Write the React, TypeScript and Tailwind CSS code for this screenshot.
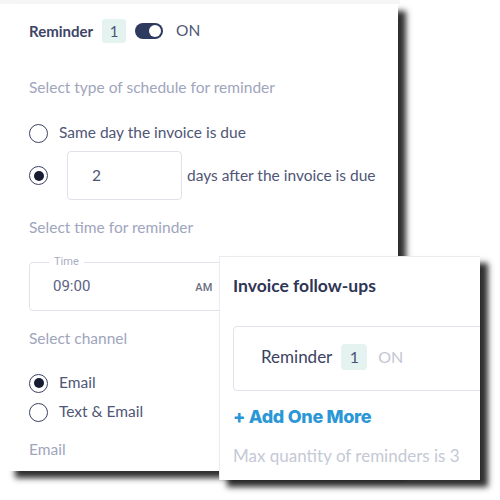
function Radio({ checked }: { checked?: boolean }) {
  return (
    <span className="flex h-[19px] w-[19px] shrink-0 items-center justify-center rounded-full border-[1.5px] border-[#3b4261] bg-white">
      {checked && <span className="h-[10px] w-[10px] rounded-full bg-[#181c33]" />}
    </span>
  )
}

function Badge({ big }: { big?: boolean }) {
  return (
    <span
      className={
        big
          ? 'flex h-[26px] w-[26px] items-center justify-center rounded-[4px] bg-[#e4f3ef] text-[16px] text-[#4a5375]'
          : 'flex h-[24px] w-[24px] items-center justify-center rounded-[3px] bg-[#e4f3ef] text-[15px] text-[#4a5375]'
      }
    >
      1
    </span>
  )
}

function ScheduleCard() {
  return (
    <div className="absolute left-[7px] top-[4px] h-[467px] w-[391px] overflow-hidden bg-white pl-[22px] pt-[15px] text-[15.5px] shadow-[8px_7px_6px_rgba(0,0,0,0.82)]">
      <div className="flex h-[24px] items-center">
        <span className="text-[15px] font-bold text-[#3d4466]">Reminder</span>
        <span className="ml-[9px]">
          <Badge />
        </span>
        <span className="ml-[9px] flex h-[16px] w-[28px] items-center justify-end rounded-full bg-[#2f3a5f] pr-[2px]">
          <span className="h-[12px] w-[12px] rounded-full bg-white" />
        </span>
        <span className="ml-[13px] text-[15.5px] text-[#4f5676]">ON</span>
      </div>

      <div className="mt-[34px] h-[20px] leading-[20px] text-[#a0a5bd]">
        Select type of schedule for reminder
      </div>

      <div className="mt-[26px] flex h-[20px] items-center gap-[11px] text-[#4f5676]">
        <Radio />
        <span>Same day the invoice is due</span>
      </div>

      <div className="mt-[8px] flex h-[49px] items-center text-[#4f5676]">
        <Radio checked />
        <div className="ml-[19px] flex h-[49px] w-[115px] items-center rounded-[4px] border border-[#dfe2ea] pl-[24px]">
          2
        </div>
        <span className="ml-[5px]">days after the invoice is due</span>
      </div>

      <div className="mt-[17px] h-[20px] leading-[20px] text-[#a0a5bd]">Select time for reminder</div>

      <div className="relative mt-[25px] flex h-[49px] w-[300px] items-center rounded-[4px] border border-[#e0e2ea] pl-[23px] font-['Roboto',sans-serif]">
        <span className="absolute left-[19px] top-[-8px] bg-white px-[5px] text-[11px] leading-[14px] text-[#a9adc0]">
          Time
        </span>
        <span className="text-[15px] text-[#5b6283]">09:00</span>
        <span className="ml-[105px] mt-[3px] text-[11px] font-medium text-[#6b6f80]">AM</span>
      </div>

      <div className="mt-[17px] h-[20px] leading-[20px] text-[#a0a5bd]">Select channel</div>

      <div className="mt-[25px] flex h-[20px] items-center gap-[11px] text-[#4f5676]">
        <Radio checked />
        <span>Email</span>
      </div>
      <div className="mt-[9px] flex h-[20px] items-center gap-[11px] text-[#4f5676]">
        <Radio />
        <span>Text &amp; Email</span>
      </div>

      <div className="mt-[17px] h-[20px] leading-[20px] text-[#a0a5bd]">Email</div>
    </div>
  )
}

function FollowUpsCard() {
  return (
    <div className="absolute left-[219px] top-[256px] h-[224px] w-[261px] overflow-hidden border-l border-t border-[#ececf0] bg-white pl-[13px] pt-[19px] shadow-[8px_7px_6px_rgba(0,0,0,0.82)]">
      <div className="h-[20px] text-[17.5px] font-bold leading-[20px] text-[#2e3555]">Invoice follow-ups</div>
      <div className="mt-[30px] flex h-[65px] w-[290px] items-center rounded-[4px] border border-[#dfe2ea] pb-[4px] pl-[27px]">
        <span className="text-[17px] text-[#3b4261]">Reminder</span>
        <span className="ml-[9px]">
          <Badge big />
        </span>
        <span className="ml-[11px] text-[16px] text-[#c3c7d3]">ON</span>
      </div>
      <div className="mt-[16px] h-[20px] font-['Inter',sans-serif] text-[18px] font-extrabold leading-[20px] tracking-[-0.3px] text-[#2b97d6]">
        + Add One More
      </div>
      <div className="mt-[19px] h-[20px] text-[17px] leading-[20px] text-[#c5c9d5]">
        Max quantity of reminders is 3
      </div>
    </div>
  )
}

export default function App() {
  return (
    <div className="relative h-[500px] w-[500px] overflow-hidden bg-white font-['Lato',sans-serif]">
      <div className="absolute left-0 top-0 h-[4px] w-[400px] bg-[#f6f6f6]" />
      <ScheduleCard />
      <FollowUpsCard />
    </div>
  )
}
